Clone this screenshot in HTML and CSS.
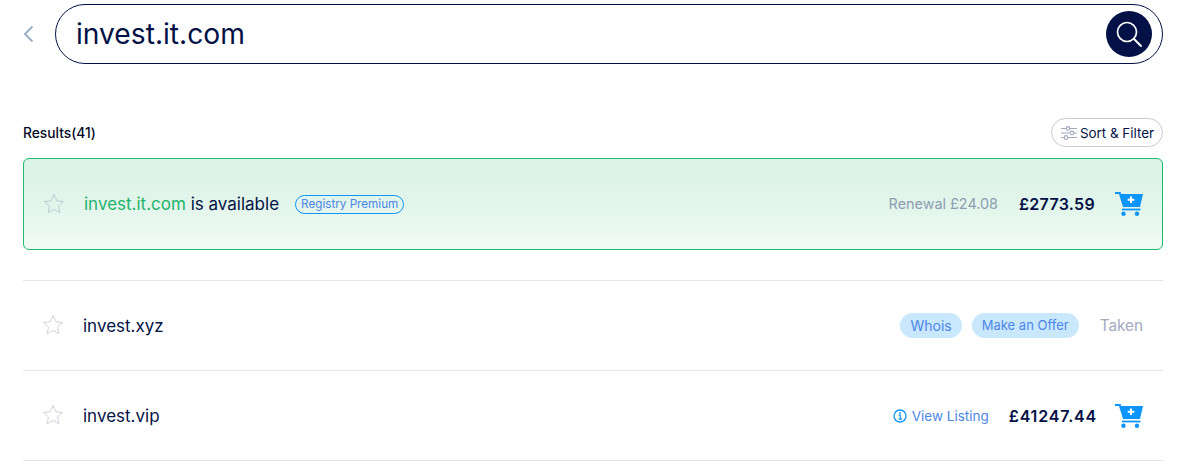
FILE: index.html
```html
<!DOCTYPE html>
<html lang="en">
<head>
    <meta charset="UTF-8">
    <meta name="viewport" content="width=device-width, initial-scale=1.0">
    <title>Domain search</title>
    <link rel="stylesheet" href="styles.css">
</head>
<body>
    <div class="search-row">
        <svg class="back-icon" width="12" height="18" viewBox="0 0 12 18"><path d="M9.500 1.500 2 9l7.500 7.500" fill="none" stroke="#9db0c8" stroke-width="2"/></svg>
        <div class="search-box">
            <span class="search-text">invest.it.com</span>
            <div class="search-btn">
                <svg width="28" height="28" viewBox="0 0 28 28"><circle cx="12" cy="12" r="9.500" fill="none" stroke="#fff" stroke-width="1.700"/><path d="M19 19l7 7" stroke="#fff" stroke-width="1.900" stroke-linecap="round"/></svg>
            </div>
        </div>
    </div>

    <div class="results-head">
        <span class="results-count">Results(41)</span>
        <div class="sort-btn">
            <svg width="16" height="14" viewBox="0 0 16 14"><g fill="none" stroke="#a4a9c0" stroke-width="1.200"><path d="M0 2.500h5M9 2.500h7M0 7h9M13 7h3M0 11.500h3M7 11.500h9"/><circle cx="7" cy="2.500" r="1.800"/><circle cx="11" cy="7" r="1.800"/><circle cx="5" cy="11.500" r="1.800"/></g></svg>
            Sort &amp; Filter
        </div>
    </div>

    <div class="result-card">
        <svg class="star" width="22" height="21" viewBox="0 0 22 21"><path d="M11 1.500l2.800 6.300 6.700.7-5 4.600 1.400 6.700L11 16.400l-5.900 3.400 1.400-6.700-5-4.600 6.700-.7z" fill="none" stroke="#bccbd2" stroke-width="1"/></svg>
        <span class="domain"><span class="green">invest.it.com</span> is available</span>
        <span class="premium-tag">Registry Premium</span>
        <span class="spacer"></span>
        <span class="renewal">Renewal £24.08</span>
        <span class="price">£2773.59</span>
        <svg class="cart" width="28" height="24" viewBox="0 0 28 24"><path d="M0 0h5.500l.8 2H28l-3 13H8L4 2H0z" fill="#0e95fb"/><path d="M7 17.500h18.500" stroke="#0e95fb" stroke-width="1.800"/><circle cx="8.500" cy="21.800" r="2.200" fill="#0e95fb"/><circle cx="22" cy="21.800" r="2.200" fill="#0e95fb"/><path d="M16 4.500v6.500M12.700 7.700h6.600" stroke="#fff" stroke-width="2"/></svg>
    </div>

    <div class="result-list">
        <div class="result-row">
            <svg class="star" width="22" height="21" viewBox="0 0 22 21"><path d="M11 1.500l2.800 6.300 6.700.7-5 4.600 1.400 6.700L11 16.400l-5.900 3.400 1.400-6.700-5-4.600 6.700-.7z" fill="none" stroke="#cfd3dc" stroke-width="1"/></svg>
            <span class="domain">invest.xyz</span>
            <span class="spacer"></span>
            <span class="chip">Whois</span>
            <span class="chip chip-wide">Make an Offer</span>
            <span class="taken">Taken</span>
        </div>
        <div class="result-row">
            <svg class="star" width="22" height="21" viewBox="0 0 22 21"><path d="M11 1.500l2.800 6.300 6.700.7-5 4.600 1.400 6.700L11 16.400l-5.900 3.400 1.400-6.700-5-4.600 6.700-.7z" fill="none" stroke="#cfd3dc" stroke-width="1"/></svg>
            <span class="domain">invest.vip</span>
            <span class="spacer"></span>
            <span class="listing">
                <svg width="14" height="14" viewBox="0 0 14 14"><circle cx="7" cy="7" r="6" fill="none" stroke="#0e95fb" stroke-width="1.300"/><path d="M5.500 6.200H7.300V10M5.500 10.200h3.500" fill="none" stroke="#0e95fb" stroke-width="1.200"/><circle cx="7" cy="4" r=".9" fill="#0e95fb"/></svg>
                View Listing
            </span>
            <span class="price price-wide">£41247.44</span>
            <svg class="cart" width="28" height="24" viewBox="0 0 28 24"><path d="M0 0h5.500l.8 2H28l-3 13H8L4 2H0z" fill="#0e95fb"/><path d="M7 17.500h18.500" stroke="#0e95fb" stroke-width="1.800"/><circle cx="8.500" cy="21.800" r="2.200" fill="#0e95fb"/><circle cx="22" cy="21.800" r="2.200" fill="#0e95fb"/><path d="M16 4.500v6.500M12.700 7.700h6.600" stroke="#fff" stroke-width="2"/></svg>
        </div>
    </div>
</body>
</html>
```

FILE: styles.css
```css
body {
    margin: 0;
    padding: 4px 37px 0 23px;
    font-family: Inter, "Liberation Sans", sans-serif;
    color: #031146;
    background: #fff;
}

.search-row {
    display: flex;
    align-items: center;
    gap: 20px;
}

.back-icon {
    flex: none;
}

.search-box {
    flex: 1;
    height: 60px;
    box-sizing: border-box;
    border: 1px solid #031146;
    border-radius: 30px;
    display: flex;
    align-items: center;
    justify-content: space-between;
    padding: 0 10px 0 20px;
}

.search-text {
    font-size: 28.2px;
}

.search-btn {
    width: 46px;
    height: 46px;
    border-radius: 50%;
    background: #031146;
    display: flex;
    align-items: center;
    justify-content: center;
}

.results-head {
    display: flex;
    align-items: center;
    justify-content: space-between;
    margin-top: 54px;
}

.results-count {
    font-size: 13.8px;
    font-weight: 500;
    color: #050a24;
}

.sort-btn {
    height: 29px;
    box-sizing: border-box;
    border: 1px solid #c9cbd8;
    border-radius: 15px;
    display: flex;
    align-items: center;
    gap: 3px;
    padding: 0 8px 0 9px;
    font-size: 13.4px;
}

.result-card {
    height: 92px;
    box-sizing: border-box;
    margin-top: 11px;
    border: 1px solid #1fb86f;
    border-radius: 6px;
    background: linear-gradient(180deg, #dcf3e7 0%, #e2f5eb 50%, #f1fbf5 100%);
    display: flex;
    align-items: center;
    padding: 0 19px;
}

.result-list {
    margin-top: 30px;
    border-top: 1px solid #e4e5ec;
}

.result-row {
    height: 90px;
    box-sizing: border-box;
    border-bottom: 1px solid #e4e5ec;
    display: flex;
    align-items: center;
    padding: 0 20px 0 19px;
}

.star {
    flex: none;
    margin: 0 19px 2px 0;
}

.domain {
    font-size: 17px;
}

.green {
    color: #1fb36b;
}

.spacer {
    flex: 1;
}

.premium-tag {
    margin-left: 16px;
    height: 19px;
    box-sizing: border-box;
    border: 1px solid #0e95fb;
    border-radius: 10px;
    padding: 0 5px;
    font-size: 11.7px;
    line-height: 17px;
    color: #4c86e8;
}

.renewal {
    font-size: 14.4px;
    color: #8d9db0;
    margin: 0 21px 2px 0;
}

.price {
    font-size: 16px;
    font-weight: 600;
    letter-spacing: 0.3px;
    margin-right: 20px;
}

.price-wide {
    letter-spacing: 0.8px;
    margin-right: 18px;
}

.cart {
    flex: none;
}

.chip {
    height: 25px;
    border-radius: 13px;
    background: #c9e7fd;
    color: #4c86e8;
    font-size: 14px;
    line-height: 25px;
    padding: 0 10px;
    margin-right: 10px;
}

.chip-wide {
    font-size: 13px;
}

.taken {
    font-size: 15.3px;
    color: #a4a9c0;
    margin-left: 11px;
}

.listing {
    display: flex;
    align-items: center;
    gap: 5px;
    font-size: 13.5px;
    color: #4c86e8;
    margin-right: 20px;
}
```
